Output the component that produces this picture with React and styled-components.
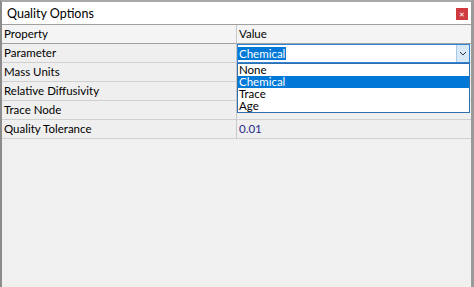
import React from "react"
import styled, { createGlobalStyle } from "styled-components"

const Global = createGlobalStyle`
  html, body {
    margin: 0;
    padding: 0;
    background: #f0f0f0;
  }
  body {
    font-family: Lato, "Noto Sans", Arial, sans-serif;
    color: #000;
  }
`

const Window = styled("div")`
  width: 474px;
  height: 287px;
  box-sizing: border-box;
  border-top: 2px solid #a8a8a8;
  border-left: 2px solid #8c8c8c;
  border-right: 3px solid #9a9a9a;
  background: #f0f0f0;
  display: flex;
  flex-direction: column;
`

const TitleBar = styled("div")`
  height: 22px;
  background: #fff;
  display: flex;
  align-items: center;
  justify-content: space-between;
  padding: 0 3px 0 5px;
  font-size: 12.5px;
`

const CloseBtn = styled("div")`
  width: 12px;
  height: 12px;
  background: #cf3a3f;
  color: #fff;
  font-size: 7px;
  line-height: 12px;
  text-align: center;
  margin-top: 2px;
`

const Grid = styled("div")`
  display: grid;
  grid-template-columns: 234px 1fr;
  border-top: 1px solid #a0a0a0;
  font-size: 11.5px;
`

const Cell = styled("div")`
  position: relative;
  height: 18px;
  line-height: 18px;
  padding-left: 2px;
  border-bottom: 1px solid ${(p) => (p.$head ? "#a0a0a0" : "#d0d0d0")};
  border-left: ${(p) => (p.$right ? "1px solid #c8c8c8" : "none")};
  background: ${(p) => (p.$head ? "#f4f4f4" : "#efefef")};
  color: ${(p) => (p.$value ? "#2a2a8a" : "#000")};
  white-space: nowrap;
`

const Combo = styled("div")`
  position: absolute;
  left: 0;
  top: 0;
  right: 1px;
  height: 19px;
  box-sizing: border-box;
  border: 1px solid #2f84d6;
  background: #fff;
  display: flex;
  align-items: center;
  z-index: 2;
`

const Selected = styled("span")`
  background: #0078d7;
  color: #fff;
  line-height: 13px;
  padding: 0 1px;
`

const Arrow = styled("div")`
  margin-left: auto;
  width: 12px;
  height: 17px;
  background: #d9e8f7;
  border-left: 1px solid #a8c8e8;
  display: flex;
  align-items: center;
  justify-content: center;
`

const List = styled("div")`
  position: absolute;
  left: 0;
  top: 19px;
  right: 1px;
  box-sizing: border-box;
  border: 1px solid #2f6fb0;
  background: #fff;
  z-index: 3;
`

const Item = styled("div")`
  height: 12px;
  line-height: 12px;
  padding-left: 1px;
  background: ${(p) => (p.$active ? "#0078d7" : "#fff")};
  color: ${(p) => (p.$active ? "#fff" : "#000")};
`

const rows = [
  ["Parameter", ""],
  ["Mass Units", ""],
  ["Relative Diffusivity", ""],
  ["Trace Node", ""],
  ["Quality Tolerance", "0.01"],
]

const options = ["None", "Chemical", "Trace", "Age"]

export default function App() {
  return (
    <>
      <Global />
      <Window>
        <TitleBar>
          <span>Quality Options</span>
          <CloseBtn>✕</CloseBtn>
        </TitleBar>
        <Grid>
          <Cell $head>Property</Cell>
          <Cell $head $right>Value</Cell>
          {rows.map(([name, val], i) => (
            <React.Fragment key={name}>
              <Cell>{name}</Cell>
              <Cell $right $value>
                {val}
                {i === 0 && (
                  <>
                    <Combo>
                      <Selected>Chemical</Selected>
                      <Arrow>
                        <svg width="8" height="5" viewBox="0 0 8 5">
                          <path d="M1 1 L4 4 L7 1" fill="none" stroke="#333" strokeWidth="1" />
                        </svg>
                      </Arrow>
                    </Combo>
                    <List>
                      {options.map((o) => (
                        <Item key={o} $active={o === "Chemical"}>{o}</Item>
                      ))}
                    </List>
                  </>
                )}
              </Cell>
            </React.Fragment>
          ))}
        </Grid>
      </Window>
    </>
  )
}
